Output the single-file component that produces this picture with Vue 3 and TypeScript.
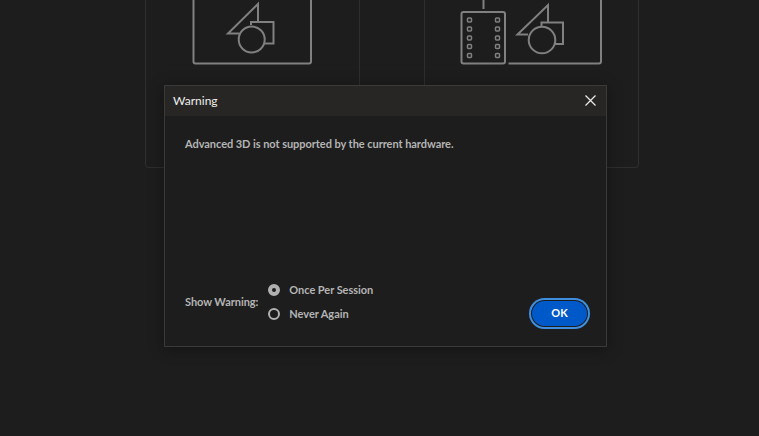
<template>
  <div class="page">
    <div class="panel">
      <div class="cell">
        <svg class="art" width="214" height="70" viewBox="145 0 214 70">
          <path d="M193.5 -4V61.5a2 2 0 0 0 2 2H309a2 2 0 0 0 2-2V-4" />
          <path d="M258 22V4L228 33.5H239" />
          <path d="M251 25V22H273.5V43.5H264" />
          <circle cx="251.7" cy="39.5" r="13" />
        </svg>
      </div>
      <div class="divider"></div>
      <div class="cell">
        <svg class="art" width="214" height="70" viewBox="424 0 214 70">
          <path d="M601 -4V61.5a2 2 0 0 1-2 2H508.5" />
          <path d="M483.5 0V9" />
          <rect x="461.5" y="12" width="43.5" height="51.5" rx="2" />
          <g class="holes">
            <rect v-for="hole in filmHoles" :key="hole.x + '-' + hole.y" :x="hole.x" :y="hole.y" width="4" height="4" rx="1" />
          </g>
          <path d="M548 22V5L517.5 34.5H528" />
          <path d="M541.5 26V22.5H563V44H554" />
          <circle cx="542" cy="40" r="13.3" />
        </svg>
      </div>
    </div>

    <div class="dialog">
      <div class="titlebar">
        <span class="title">Warning</span>
        <button class="close" aria-label="Close">
          <svg width="11" height="11" viewBox="0 0 11 11"><path d="M.5.5l10 10M10.5.5l-10 10" /></svg>
        </button>
      </div>
      <div class="body">
        <p class="message">Advanced 3D is not supported by the current hardware.</p>
        <div class="footer">
          <div class="options">
            <span class="options-label">Show Warning:</span>
            <div class="radios">
              <label v-for="option in options" :key="option" class="radio" @click="selected = option">
                <span class="dot" :class="{ checked: selected === option }"></span>
                {{ option }}
              </label>
            </div>
          </div>
          <button class="ok">OK</button>
        </div>
      </div>
    </div>
  </div>
</template>

<script setup lang="ts">
import { ref } from 'vue';

const options = ['Once Per Session', 'Never Again'];
const selected = ref(options[0]);

// Sprocket holes down both sides of the film strip
const filmHoles = [467.5, 495.5].flatMap((x) =>
  [18, 27, 36, 44.5, 53.5].map((y) => ({ x, y }))
);
</script>

<style>
html,
body {
  margin: 0;
  background: #1d1d1d;
  overflow: hidden;
}
</style>

<style scoped>
.page {
  position: relative;
  width: 759px;
  height: 436px;
  background: #1d1d1d;
  font-family: Lato, "Open Sans", sans-serif;
}

.panel {
  display: flex;
  width: 494px;
  height: 168px;
  margin-left: 145px;
  box-sizing: border-box;
  border: 1px solid #2e2e2e;
  border-top: none;
  border-radius: 0 0 4px 4px;
}

.cell {
  flex: 1;
}

.divider {
  width: 64px;
  border-left: 1px solid #2e2e2e;
  border-right: 1px solid #2e2e2e;
}

.art {
  display: block;
  margin-left: -1px;
  fill: none;
  stroke: #808080;
  stroke-width: 2;
}

.holes {
  stroke-width: 1.5;
}

.dialog {
  position: absolute;
  left: 164px;
  top: 85px;
  width: 443px;
  height: 262px;
  box-sizing: border-box;
  display: flex;
  flex-direction: column;
  background: #1d1d1d;
  border: 1px solid #3a3a3a;
  box-shadow: 0 2px 14px rgba(0, 0, 0, 0.35);
}

.titlebar {
  display: flex;
  align-items: center;
  justify-content: space-between;
  height: 30px;
  padding: 0 10px 0 8px;
  background: #272624;
}

.title {
  margin-bottom: 1px;
  color: #eee;
  font-size: 12px;
}

.close {
  display: flex;
  padding: 0;
  margin-bottom: 2px;
  border: none;
  background: none;
}

.close path {
  fill: none;
  stroke: #e8e8e8;
  stroke-width: 1.3;
}

.body {
  flex: 1;
  display: flex;
  flex-direction: column;
  justify-content: space-between;
  padding: 20px 16px 17px 20px;
}

.message {
  margin: 0;
  color: #b4b4b4;
  font-size: 11px;
  font-weight: 700;
  line-height: 16px;
  letter-spacing: -0.05px;
}

.footer {
  display: flex;
  align-items: flex-end;
  justify-content: space-between;
}

.options {
  display: flex;
  align-items: center;
  gap: 10px;
  margin-bottom: 8px;
  color: #b4b4b4;
  font-size: 11px;
  font-weight: 700;
  letter-spacing: -0.05px;
}

.radios {
  display: flex;
  flex-direction: column;
  gap: 8px;
}

.radio {
  display: flex;
  align-items: center;
  gap: 9px;
  height: 16px;
}

.dot {
  width: 12px;
  height: 12px;
  margin-top: 2px;
  box-sizing: border-box;
  border: 2px solid #b0b0b0;
  border-radius: 50%;
  background: #1d1d1d;
}

.dot.checked {
  border: 4px solid #b0b0b0;
}

.ok {
  width: 55px;
  height: 25px;
  margin: 3px;
  padding: 0 0 2px;
  border: none;
  border-radius: 13px;
  background: #0059c9;
  box-shadow: 0 0 0 1px #1d1d1d, 0 0 0 3px #3f8fe0;
  color: #fff;
  font-family: inherit;
  font-size: 11px;
  font-weight: 700;
}
</style>
